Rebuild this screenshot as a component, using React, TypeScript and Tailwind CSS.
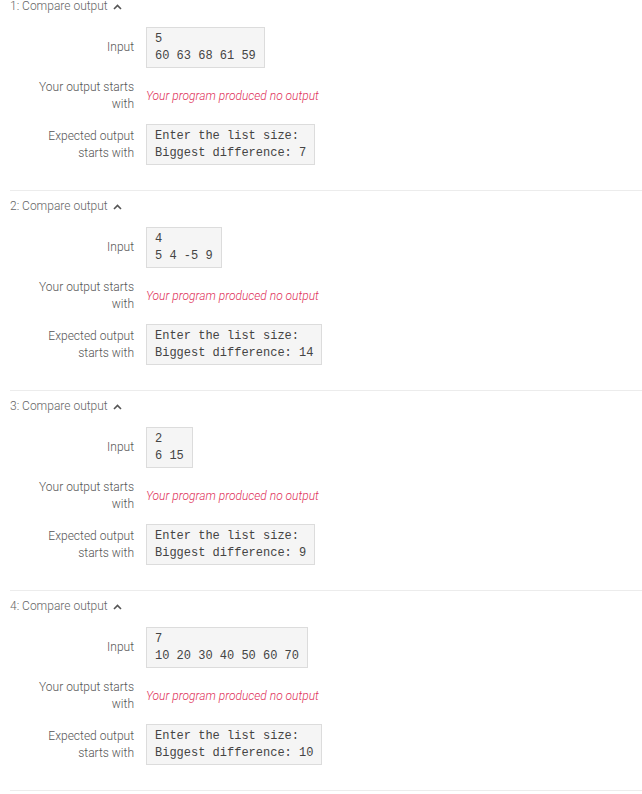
const tests = [
  { n: 1, input: ['5', '60 63 68 61 59'], diff: '7' },
  { n: 2, input: ['4', '5 4 -5 9'], diff: '14' },
  { n: 3, input: ['2', '6 15'], diff: '9' },
  { n: 4, input: ['7', '10 20 30 40 50 60 70'], diff: '10' },
];

const Chevron = () => (
  <svg width="9" height="6" viewBox="0 0 9 6" className="ml-[5px] mt-[1px]">
    <polyline points="1,5 4.5,1.5 8,5" fill="none" stroke="#555" strokeWidth="1.6" />
  </svg>
);

const Box = ({ lines }: { lines: string[] }) => (
  <div className="border border-[#dcdcdc] bg-[#f5f5f5] px-[8px] py-[3px] font-['Liberation_Mono',monospace] text-[12px] leading-[16.5px] text-[#444] whitespace-pre">
    {lines.map((l) => (
      <div key={l}>{l}</div>
    ))}
  </div>
);

const Label = ({ children }: { children: React.ReactNode }) => (
  <div className="ml-[24px] w-[100px] shrink-0 text-right">{children}</div>
);

export default function App() {
  return (
    <div className="bg-white min-h-[794px] font-['Roboto',sans-serif] text-[12px] leading-[17px] text-[#555] font-light -mt-[10px] overflow-hidden">
      {tests.map((t) => (
        <div key={t.n} className="ml-[10px] border-t border-[#ececec]">
          <div className="h-[30px] flex items-center text-[#666]">
            {t.n}: Compare output <Chevron />
          </div>
          <div className="flex flex-col gap-[11px] pt-[6px] pb-[25px]">
            <div className="flex items-center gap-[12px]">
              <Label>Input</Label>
              <Box lines={t.input} />
            </div>
            <div className="flex items-center gap-[12px]">
              <Label>Your output starts with</Label>
              <span className="italic text-[#e0315a]">Your program produced no output</span>
            </div>
            <div className="flex items-center gap-[12px]">
              <Label>Expected output starts with</Label>
              <Box lines={['Enter the list size:', `Biggest difference: ${t.diff}`]} />
            </div>
          </div>
        </div>
      ))}
      <div className="ml-[10px] border-t border-[#ececec]" />
    </div>
  );
}
